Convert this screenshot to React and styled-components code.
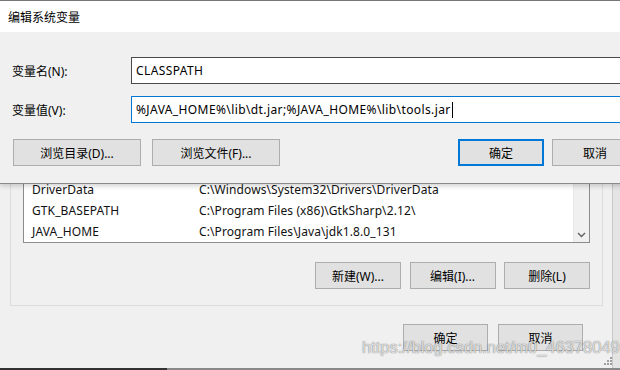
import React from "react";
import styled, { createGlobalStyle } from "styled-components";

const Global = createGlobalStyle`
  html, body { margin: 0; padding: 0; background: #f0f0f0; overflow: hidden; }
  * { box-sizing: border-box; }
`;

const FONT = `"Noto Sans", "Noto Sans CJK SC", sans-serif`;

const Desktop = styled.div`
  position: relative;
  width: 620px;
  height: 370px;
  overflow: hidden;
  background: #e4e4e4;
  font-family: ${FONT};
  font-size: 12px;
  color: #000;
`;

const BackWindow = styled.div`
  position: absolute;
  left: 0;
  top: 0;
  width: 613px;
  height: 368px;
  background: #f0f0f0;
  border-right: 1px solid #c8c8c8;
  display: flex;
  flex-direction: column;
  padding-top: 95px;
`;

const GroupBox = styled.div`
  margin-left: 10px;
  width: 593px;
  border: 1px solid #dcdcdc;
  padding: 19px 12px 16px 12px;
  display: flex;
  flex-direction: column;
`;

const ListBox = styled.div`
  border: 1px solid #8c8c8c;
  background: #fff;
  display: flex;
`;

const ListBody = styled.div`
  flex: 1;
  display: flex;
  flex-direction: column;
  padding-top: ${(p) => p.$scrolled}px;
`;

const ListRow = styled.div`
  height: 21px;
  display: grid;
  grid-template-columns: 167px 1fr;
  align-items: center;
  padding-left: 8px;
  white-space: nowrap;
  color: #111;
  letter-spacing: 0.1px;
`;

const ScrollBar = styled.div`
  width: 16px;
  background: #f0f0f0;
  border-left: 1px solid #e8e8e8;
  display: flex;
  flex-direction: column;
  justify-content: flex-end;
  align-items: center;
  padding-bottom: 4px;
`;

const ButtonRow = styled.div`
  display: flex;
  justify-content: flex-end;
  gap: ${(p) => p.$gap}px;
  margin-top: ${(p) => p.$top}px;
  padding-right: ${(p) => p.$right || 0}px;
`;

const Button = styled.div`
  width: ${(p) => p.$w || 86}px;
  height: 27px;
  background: #e1e1e1;
  border: ${(p) => (p.$default ? "2px solid #0078d7" : "1px solid #adadad")};
  display: flex;
  align-items: center;
  justify-content: center;
  font-family: ${FONT};
  font-size: 12px;
  color: #000;
  white-space: nowrap;
`;

const Dialog = styled.div`
  position: absolute;
  left: 0;
  top: 0;
  width: 680px;
  height: 184px;
  background: #f0f0f0;
  border-top: 1px solid #777;
  border-bottom: 1px solid #8a8a8a;
  box-shadow: 0 2px 5px rgba(0, 0, 0, 0.18);
  display: flex;
  flex-direction: column;
`;

const TitleBar = styled.div`
  height: 31px;
  background: #fff;
  display: flex;
  align-items: center;
  padding-left: 8px;
  font-size: 12px;
`;

const DialogBody = styled.div`
  padding: 25px 42px 0 12px;
  display: flex;
  flex-direction: column;
`;

const FieldRow = styled.div`
  display: flex;
  align-items: center;
  margin-bottom: 12px;
`;

const Label = styled.div`
  width: 119px;
  font-size: 12px;
`;

const TextBox = styled.div`
  flex: 1;
  height: 27px;
  background: #fff;
  border: 1px solid ${(p) => (p.$focused ? "#0078d7" : "#4a4a4a")};
  display: flex;
  align-items: center;
  padding-left: 4px;
  font-size: 12px;
  letter-spacing: 0.4px;
  white-space: nowrap;
`;

const Caret = styled.span`
  display: inline-block;
  width: 1px;
  height: 16px;
  background: #000;
  margin-left: 1px;
`;

const DialogButtons = styled.div`
  display: flex;
  justify-content: space-between;
  margin-top: 4px;
  padding-left: 1px;
`;

const Group = styled.div`
  display: flex;
  gap: ${(p) => p.$gap}px;
`;

const Watermark = styled.div`
  position: absolute;
  left: 362px;
  top: 338px;
  font-family: "Liberation Sans", Arial, sans-serif;
  font-size: 16.5px;
  color: rgba(255, 255, 255, 0.72);
  text-shadow: 0 0 1px rgba(90, 90, 90, 0.6), 0 0 1px rgba(90, 90, 90, 0.6);
  white-space: nowrap;
`;

const Grip = styled.svg`
  position: absolute;
  left: 603px;
  top: 356px;
`;

const Taskbar = styled.div`
  position: absolute;
  left: 0;
  bottom: 0;
  width: 620px;
  height: 2px;
  background: linear-gradient(to right, #333 0, #333 167px, #888 167px, #888 100%);
`;

const rows = [
  ["DriverData", "C:\\Windows\\System32\\Drivers\\DriverData"],
  ["GTK_BASEPATH", "C:\\Program Files (x86)\\GtkSharp\\2.12\\"],
  ["JAVA_HOME", "C:\\Program Files\\Java\\jdk1.8.0_131"],
];

export default function App() {
  return (
    <>
      <Global />
      <Desktop>
        <BackWindow>
          <GroupBox>
            <ListBox>
              <ListBody $scrolled={63}>
                {rows.map(([n, v]) => (
                  <ListRow key={n}>
                    <span>{n}</span>
                    <span>{v}</span>
                  </ListRow>
                ))}
              </ListBody>
              <ScrollBar>
                <svg width="9" height="6" viewBox="0 0 9 6">
                  <path d="M1 1 L4.5 4.5 L8 1" fill="none" stroke="#606060" strokeWidth="1.4" />
                </svg>
              </ScrollBar>
            </ListBox>
            <ButtonRow $gap={8.5} $top={19}>
              <Button>新建(W)...</Button>
              <Button>编辑(I)...</Button>
              <Button>删除(L)</Button>
            </ButtonRow>
          </GroupBox>
          <ButtonRow $gap={10} $top={18} $right={29}>
            <Button $w={85}>确定</Button>
            <Button $w={85}>取消</Button>
          </ButtonRow>
        </BackWindow>

        <Dialog>
          <TitleBar>编辑系统变量</TitleBar>
          <DialogBody>
            <FieldRow>
              <Label>变量名(N):</Label>
              <TextBox>CLASSPATH</TextBox>
            </FieldRow>
            <FieldRow>
              <Label>变量值(V):</Label>
              <TextBox $focused>
                %JAVA_HOME%\lib\dt.jar;%JAVA_HOME%\lib\tools.jar
                <Caret />
              </TextBox>
            </FieldRow>
            <DialogButtons>
              <Group $gap={11}>
                <Button $w={128}>浏览目录(D)...</Button>
                <Button $w={128}>浏览文件(F)...</Button>
              </Group>
              <Group $gap={8}>
                <Button $w={86} $default>确定</Button>
                <Button $w={86}>取消</Button>
              </Group>
            </DialogButtons>
          </DialogBody>
        </Dialog>

        <Watermark>https://blog.csdn.net/m0_46378049</Watermark>
        <Grip width="10" height="10" viewBox="0 0 10 10">
          <g fill="#a0a0a0">
            <rect x="7" y="1" width="2" height="2" />
            <rect x="4" y="4" width="2" height="2" />
            <rect x="7" y="4" width="2" height="2" />
            <rect x="1" y="7" width="2" height="2" />
            <rect x="4" y="7" width="2" height="2" />
            <rect x="7" y="7" width="2" height="2" />
          </g>
        </Grip>
        <Taskbar />
      </Desktop>
    </>
  );
}
